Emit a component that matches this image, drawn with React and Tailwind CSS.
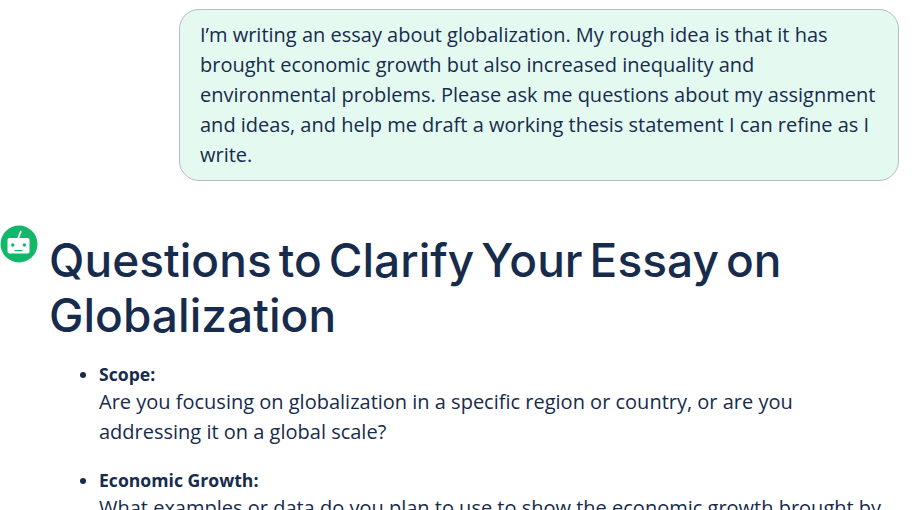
const questions = [
  {
    label: 'Scope:',
    text: 'Are you focusing on globalization in a specific region or country, or are you addressing it on a global scale?',
  },
  {
    label: 'Economic Growth:',
    text: 'What examples or data do you plan to use to show the economic growth brought by globalization?',
  },
];

const BotAvatar = () => (
  <svg viewBox="0 0 38 38" className="w-[38px] h-[38px] shrink-0">
    <circle cx="19" cy="19" r="18.5" fill="#12B76A" />
    <path d="M18.3 13 L20.8 6.5" stroke="#fff" strokeWidth="1.8" strokeLinecap="round" />
    <rect x="7.5" y="13" width="22" height="15.5" rx="2" fill="#fff" />
    <circle cx="12.8" cy="20" r="1.7" fill="#12B76A" />
    <circle cx="24.4" cy="20" r="1.7" fill="#12B76A" />
    <rect x="14.5" y="25" width="8" height="1.2" fill="#12B76A" />
  </svg>
);

export default function App() {
  return (
    <div className="h-screen overflow-hidden bg-white text-[#172b4d] font-['Open_Sans',sans-serif]">
      <div className="flex justify-end pt-[9px] pr-[22px]">
        <div className="w-[720px] rounded-[20px] border border-[#b4bcc8] bg-[#e4faf1] px-[20px] py-[10px] text-[20px] leading-[30px]">
          I’m writing an essay about globalization. My rough idea is that it has brought economic growth but also increased inequality and environmental problems. Please ask me questions about my assignment and ideas, and help me draft a working thesis statement I can refine as I write.
        </div>
      </div>

      <div className="flex mt-[44px] pr-[22px] gap-[12px]">
        <BotAvatar />
        <div className="flex-1 min-w-0">
          <h1 className="mt-[8px] -ml-px text-[46px] leading-[55px] font-medium tracking-[0.05px] [word-spacing:-5.4px] font-['Inter',sans-serif] text-[#172b4d]">
            Questions to Clarify Your Essay on Globalization
          </h1>
          <ul className="mt-[17px] pl-[49px] list-disc marker:text-[#172b4d]">
            {questions.map((q) => (
              <li key={q.label} className="mb-[18.5px] text-[17.6px] leading-[27px]">
                <div className="pt-[2px] leading-[25px] font-bold">{q.label}</div>
                <div className="text-[20px] leading-[30px]">{q.text}</div>
              </li>
            ))}
          </ul>
        </div>
      </div>
    </div>
  );
}
